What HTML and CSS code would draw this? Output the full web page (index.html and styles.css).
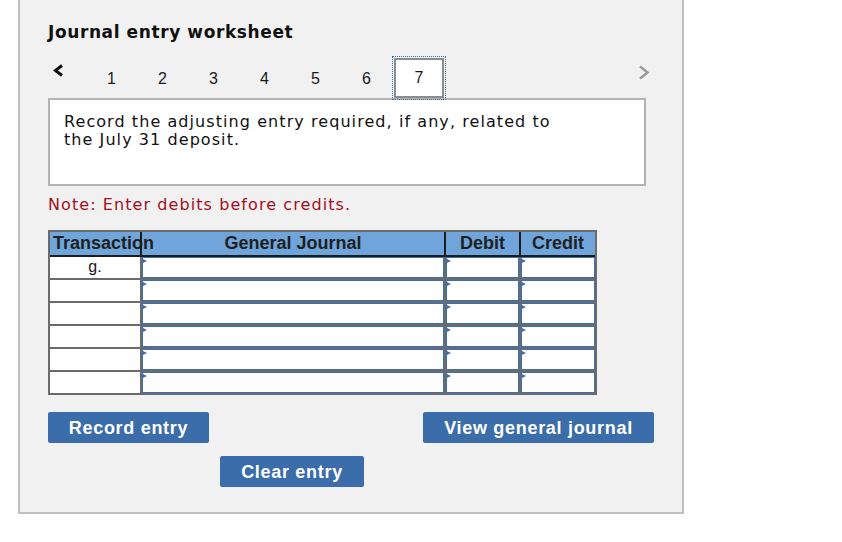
FILE: index.html
```html
<!DOCTYPE html>
<html>
<head>
<meta charset="utf-8">
<link rel="stylesheet" href="styles.css">
</head>
<body>
<div class="panel">
  <h1 class="title">Journal entry worksheet</h1>
  <div class="nav">
    <span class="nav-prev"><svg width="16" height="16" viewBox="0 0 16 16"><path d="M12 2.5 L5.5 7.5 L12 12.5" fill="none" stroke="#111" stroke-width="3"/></svg></span>
    <span class="step">1</span>
    <span class="step">2</span>
    <span class="step">3</span>
    <span class="step">4</span>
    <span class="step">5</span>
    <span class="step">6</span>
    <span class="step current">7</span>
    <span class="nav-next"><svg width="16" height="16" viewBox="0 0 16 16"><path d="M4 2.5 L11.5 8.5 L4 14.5" fill="none" stroke="#9a9a9a" stroke-width="2.5"/></svg></span>
  </div>
  <div class="prompt">Record the adjusting entry required, if any, related to<br>the July 31 deposit.</div>
  <p class="note">Note: Enter debits before credits.</p>
  <div class="jtable">
    <div class="thead">
      <div class="th th-trans">Transaction</div>
      <div class="th">General Journal</div>
      <div class="th">Debit</div>
      <div class="th">Credit</div>
    </div>
    <div class="tbody">
      <div class="td td-trans">g.</div><div class="td td-input"></div><div class="td td-input"></div><div class="td td-input"></div>
      <div class="td td-trans"></div><div class="td td-input"></div><div class="td td-input"></div><div class="td td-input"></div>
      <div class="td td-trans"></div><div class="td td-input"></div><div class="td td-input"></div><div class="td td-input"></div>
      <div class="td td-trans"></div><div class="td td-input"></div><div class="td td-input"></div><div class="td td-input"></div>
      <div class="td td-trans"></div><div class="td td-input"></div><div class="td td-input"></div><div class="td td-input"></div>
      <div class="td td-trans"></div><div class="td td-input"></div><div class="td td-input"></div><div class="td td-input"></div>
    </div>
  </div>
  <div class="actions">
    <div class="actions-row">
      <button class="btn btn-record">Record entry</button>
      <button class="btn btn-view">View general journal</button>
    </div>
    <div class="actions-row2">
      <button class="btn btn-clear">Clear entry</button>
    </div>
  </div>
</div>
</body>
</html>
```

FILE: styles.css
```css
* { box-sizing: border-box; }
body {
  margin: 0;
  background: #ffffff;
  font-family: "DejaVu Sans", Verdana, sans-serif;
  color: #1e1e1e;
}
.panel {
  margin-left: 18px;
  width: 666px;
  background: #f1f1f1;
  border: 2px solid #bfbfbf;
  border-top: none;
  padding: 22px 36px 25px 28px;
}
.title {
  margin: 0 0 13px 0;
  font-size: 17px;
  line-height: 20px;
  letter-spacing: 0.6px;
  font-weight: bold;
  color: #111;
}
.nav {
  display: flex;
  align-items: center;
  height: 43px;
}
.nav-prev {
  width: 38px;
  align-self: flex-start;
  padding-top: 8px;
  padding-left: 2px;
  display: flex;
}
.nav-next {
  margin-left: auto;
  margin-right: -6px;
  align-self: flex-start;
  padding-top: 9px;
  display: flex;
}
.step {
  width: 51px;
  text-align: center;
  font-family: "Liberation Sans", Arial, sans-serif;
  font-size: 16px;
  line-height: 20px;
  padding-top: 4px;
  color: #1a1a1a;
}
.step.current {
  width: 50px;
  height: 40px;
  margin-left: 2px;
  align-self: flex-end;
  background: #fff;
  border: 2px solid #8c8c8c;
  outline: 1px dotted #3a6ea5;
  outline-offset: 1px;
  line-height: 36px;
  padding-top: 0;
}
.prompt {
  height: 88px;
  background: #fff;
  border: 2px solid #b3b3b3;
  padding: 13px 14px;
  font-size: 16px;
  line-height: 18px;
  letter-spacing: 1.07px;
  color: #111;
}
.note {
  margin: 10px 0 16px 0;
  font-size: 16px;
  line-height: 18px;
  letter-spacing: 1.08px;
  color: #a50f1e;
}
.jtable {
  width: 549px;
  border: 2px solid #6b6b6b;
  background: #6b6b6b;
}
.thead {
  position: relative;
  display: grid;
  grid-template-columns: 90px 302px 73px 74px;
  column-gap: 2px;
  background: #1c1c1c;
  padding-bottom: 2px;
}
.thead::after {
  content: "";
  position: absolute;
  z-index: 2;
  left: 90px;
  top: 0;
  width: 2px;
  height: 23px;
  background: #1c1c1c;
}
.th {
  height: 23px;
  background: #6fa5da;
  font-family: "Liberation Sans", Arial, sans-serif;
  font-weight: bold;
  font-size: 18px;
  line-height: 23px;
  text-align: center;
  color: #1f1f1f;
  white-space: nowrap;
}
.th-trans {
  position: relative;
  z-index: 1;
  text-align: left;
  padding-left: 3px;
}
.tbody {
  display: grid;
  grid-template-columns: 90px 302px 73px 74px;
  grid-auto-rows: 21px;
  gap: 2px;
}
.td {
  background: #fff;
}
.td-trans {
  text-align: center;
  font-family: "Liberation Sans", Arial, sans-serif;
  font-size: 16px;
  line-height: 20px;
  color: #1a1a1a;
}
.td-input {
  position: relative;
  border: 1px solid #3e6fb3;
}
.td-input::before {
  content: "";
  position: absolute;
  left: 0;
  top: 1px;
  border-left: 4px solid #3e6fb3;
  border-top: 2.5px solid transparent;
  border-bottom: 2.5px solid transparent;
}
.actions {
  margin-top: 17px;
  display: flex;
  flex-direction: column;
  gap: 13px;
}
.actions-row {
  display: flex;
  justify-content: space-between;
  margin-right: -8px;
}
.actions-row2 {
  display: flex;
  padding-left: 172px;
}
.btn {
  height: 31px;
  background: #3a6da9;
  color: #fff;
  border: none;
  border-radius: 2px;
  font-family: "Liberation Sans", Arial, sans-serif;
  font-weight: bold;
  font-size: 18px;
  letter-spacing: 0.7px;
  padding: 2px 0 0 0;
}
.btn-record { width: 161px; }
.btn-view { width: 231px; }
.btn-clear { width: 144px; }
```
